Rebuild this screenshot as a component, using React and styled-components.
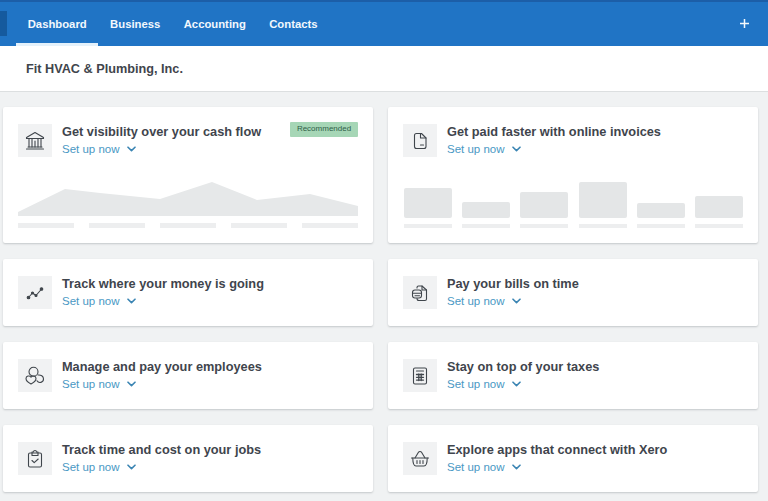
import React from "react";
import styled, { createGlobalStyle } from "styled-components";

const GlobalStyle = createGlobalStyle`
  html, body {
    margin: 0;
    padding: 0;
    height: 100%;
    overflow: hidden;
    background: #f0f2f3;
    font-family: "Liberation Sans", Arial, sans-serif;
  }
`;

const Page = styled.div`
  width: 768px;
  height: 501px;
  overflow: hidden;
`;

const Nav = styled.nav`
  box-sizing: border-box;
  height: 46px;
  background: #2074c5;
  border-top: 2px solid #1c5ea8;
  display: flex;
  align-items: stretch;
`;

const OrgBlock = styled.div`
  width: 7px;
  height: 25px;
  margin-top: 9px;
  background: #155a9e;
`;

const Tabs = styled.div`
  display: flex;
  margin-left: 9px;
`;

const Tab = styled.a`
  box-sizing: border-box;
  height: 44px;
  padding: 2px 11.7px 0;
  display: flex;
  align-items: center;
  font-size: 11.3px;
  font-weight: 700;
  color: #f2f8fd;
  border-bottom: 3px solid ${(p) => (p.$active ? "#e4f1fb" : "transparent")};
`;

const Plus = styled.div`
  margin: 0 18px 2px auto;
  align-self: center;
  display: flex;
  color: #f4f9fd;
`;

const SubHeader = styled.header`
  box-sizing: border-box;
  height: 46px;
  background: #fff;
  border-bottom: 1px solid #dcdfe0;
  padding: 0 0 0 26px;
  display: flex;
  align-items: center;
  font-size: 12.7px;
  font-weight: 700;
  color: #3f454c;
`;

const Grid = styled.main`
  display: grid;
  grid-template-columns: 370px 370px;
  grid-template-rows: 136px 67px 67px 67px;
  column-gap: 15px;
  row-gap: 16px;
  padding: 15px 0 0 3px;
`;

const Card = styled.section`
  box-sizing: border-box;
  background: #fff;
  border-radius: 2px;
  box-shadow: 0 1px 2px rgba(40, 50, 60, 0.22);
  padding: 17px 15px 0;
`;

const CardHead = styled.div`
  display: flex;
  align-items: flex-start;
`;

const IconTile = styled.div`
  flex: none;
  width: 34px;
  height: 33px;
  background: #f1f2f3;
  display: flex;
  align-items: center;
  justify-content: center;
  color: #40464c;
`;

const CardText = styled.div`
  margin-left: 10px;
`;

const Title = styled.h2`
  margin: 0;
  font-size: 12.75px;
  line-height: 16px;
  font-weight: 700;
  color: #3f454d;
`;

const SetUp = styled.a`
  display: flex;
  align-items: center;
  margin-top: 2px;
  font-size: 11.5px;
  line-height: 14px;
  color: #4a98c4;
`;

const Chevron = styled.svg`
  margin-left: 7px;
  color: #3b85b3;
`;

const Badge = styled.span`
  margin: -2px 0 0 auto;
  width: 68px;
  height: 15px;
  background: #a6d6b6;
  border-radius: 1px;
  color: #2f5f48;
  font-size: 8px;
  line-height: 14px;
  text-align: center;
`;

const AreaChart = styled.svg`
  display: block;
  margin-top: 25px;
`;

const Ticks = styled.div`
  display: flex;
  justify-content: space-between;
  margin-top: 7px;
`;

const Tick = styled.div`
  width: 56px;
  height: 5px;
  background: #edeeef;
`;

const BarChart = styled.div`
  display: grid;
  grid-template-columns: repeat(6, 48px);
  column-gap: 10.2px;
  height: 36px;
  margin: 25px 0 0 1px;
  align-items: end;
`;

const Bar = styled.div`
  height: ${(p) => p.$h}px;
  background: #e4e6e7;
  border-radius: 2px;
`;

const BarLabels = styled.div`
  display: grid;
  grid-template-columns: repeat(6, 48px);
  column-gap: 10.2px;
  margin: 6px 0 0 1px;
`;

const BarLabel = styled.div`
  height: 4px;
  background: #edeeef;
`;

const Ico = ({ children }) => (
  <svg width="20" height="20" viewBox="0 0 20 20" fill="none" stroke="currentColor" strokeWidth="1.1" strokeLinecap="round" strokeLinejoin="round">
    {children}
  </svg>
);

const BankIcon = () => (
  <Ico>
    <path d="M1.500 6.500 10 1.500l8.500 5v1h-17z" />
    <path d="M4 8v8M7 8v8M13 8v8M16 8v8M10 10v6" />
    <path d="M3 16h14M1.500 18h17" />
  </Ico>
);

const InvoiceIcon = () => (
  <Ico>
    <path d="M6.500 2.500h5L16 7v8.500a2 2 0 0 1-2 2H6.500a2 2 0 0 1-2-2v-11a2 2 0 0 1 2-2z" />
    <path d="M10.500 2.500v4.500h5.500" />
    <path d="M10.500 14h3" />
  </Ico>
);

const TrendIcon = () => (
  <Ico>
    <path d="M3 15 7.500 10l3.500 2.500L17 5.500" />
    <circle cx="3.500" cy="14.500" r="1.300" fill="currentColor" />
    <circle cx="7.500" cy="10" r="1" fill="currentColor" />
    <circle cx="11" cy="12.500" r="1" fill="currentColor" />
    <circle cx="16.500" cy="6" r="1.300" fill="currentColor" />
  </Ico>
);

const BillsIcon = () => (
  <Ico>
    <path d="M7 5V4.500A1.500 1.500 0 0 1 8.500 3H12l4.500 4v9a1.500 1.500 0 0 1-1.500 1.500H9a2 2 0 0 1-2-2" />
    <path d="M12 3v4h4.500" />
    <rect x="2.500" y="7" width="9" height="8" rx="2.500" />
    <path d="M2.500 10.200h9M5 12.800h4.500" />
  </Ico>
);

const PeopleIcon = () => (
  <Ico>
    <circle cx="8.500" cy="5.800" r="4.500" />
    <path d="M6 18c-2-1-5-3-5-5.500C1 10 4.500 9 6 11.200 7.500 9 11 10 11 12.500 11 15 8 17 6 18z" />
    <path d="M13 9c2.800-.4 5.500 1.200 5.500 4a3.500 3.500 0 0 1-6.500 1.800" />
  </Ico>
);

const TaxIcon = () => (
  <Ico>
    <rect x="3.500" y="2" width="13" height="16" rx="1.500" />
    <path d="M6.500 5h7" />
    <path d="M6.500 8.500h7M6.500 11.300h7M6.500 14.100h7M8.800 8v6.500M11.200 8v6.500" strokeWidth="1.300" />
  </Ico>
);

const ClipboardIcon = () => (
  <Ico>
    <rect x="3.500" y="4" width="13" height="14" rx="1.500" />
    <path d="M7 6.500v-3.500h1.500a1.500 1.500 0 0 1 3 0H13v3.500z" />
    <path d="m7 11.500 2.200 2.200L13.200 10" />
  </Ico>
);

const BasketIcon = () => (
  <Ico>
    <path d="M1.500 9h17" />
    <path d="M2.800 9c0 4.500.7 8 3.200 8h8c2.500 0 3.200-3.500 3.200-8" />
    <path d="M5 9 8.300 3.500a2 2 0 0 1 3.400 0L15 9" />
    <path d="M7 11.500v3M10 11.500v3M13 11.500v3" />
  </Ico>
);

const SetUpLink = () => (
  <SetUp>
    Set up now
    <Chevron width="9" height="6" viewBox="0 0 9 6" fill="none" stroke="currentColor" strokeWidth="1.600" strokeLinecap="round" strokeLinejoin="round">
      <path d="M1 1.200 4.500 4.600 8 1.200" />
    </Chevron>
  </SetUp>
);

const bars = [30, 16, 26, 36, 15, 22];

const rows = [
  { title: "Track where your money is going", icon: <TrendIcon /> },
  { title: "Pay your bills on time", icon: <BillsIcon /> },
  { title: "Manage and pay your employees", icon: <PeopleIcon /> },
  { title: "Stay on top of your taxes", icon: <TaxIcon /> },
  { title: "Track time and cost on your jobs", icon: <ClipboardIcon /> },
  { title: "Explore apps that connect with Xero", icon: <BasketIcon /> },
];

export default function App() {
  return (
    <Page>
      <GlobalStyle />
      <Nav>
        <OrgBlock />
        <Tabs>
          <Tab $active>Dashboard</Tab>
          <Tab>Business</Tab>
          <Tab>Accounting</Tab>
          <Tab>Contacts</Tab>
        </Tabs>
        <Plus>
          <svg width="11" height="11" viewBox="0 0 11 11" stroke="currentColor" strokeWidth="1.500">
            <path d="M5.500 1v9M1 5.500h9" />
          </svg>
        </Plus>
      </Nav>
      <SubHeader>Fit HVAC &amp; Plumbing, Inc.</SubHeader>
      <Grid>
        <Card>
          <CardHead>
            <IconTile><BankIcon /></IconTile>
            <CardText>
              <Title>Get visibility over your cash flow</Title>
              <SetUpLink />
            </CardText>
            <Badge>Recommended</Badge>
          </CardHead>
          <AreaChart width="340" height="34" viewBox="0 0 340 34">
            <path d="M0 30 47 7 82 11 142 17 194 0 239 18 292 12 340 24V34H0z" fill="#e6e8e9" />
          </AreaChart>
          <Ticks>
            {[0, 1, 2, 3, 4].map((i) => (
              <Tick key={i} />
            ))}
          </Ticks>
        </Card>
        <Card>
          <CardHead>
            <IconTile><InvoiceIcon /></IconTile>
            <CardText>
              <Title>Get paid faster with online invoices</Title>
              <SetUpLink />
            </CardText>
          </CardHead>
          <BarChart>
            {bars.map((h, i) => (
              <Bar key={i} $h={h} />
            ))}
          </BarChart>
          <BarLabels>
            {bars.map((h, i) => (
              <BarLabel key={i} />
            ))}
          </BarLabels>
        </Card>
        {rows.map((row) => (
          <Card key={row.title}>
            <CardHead>
              <IconTile>{row.icon}</IconTile>
              <CardText>
                <Title>{row.title}</Title>
                <SetUpLink />
              </CardText>
            </CardHead>
          </Card>
        ))}
      </Grid>
    </Page>
  );
}
